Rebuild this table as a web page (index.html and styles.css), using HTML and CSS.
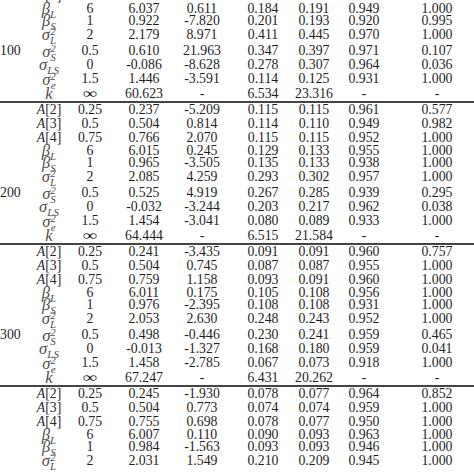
FILE: index.html
```html
<!DOCTYPE html>
<html>
<head>
<meta charset="utf-8">
<link rel="stylesheet" href="styles.css">
</head>
<body>
<div class="sheet">
  <div class="blk first">
    <div class="row ra4"><div class="c lab"></div><div class="c m"><i>A</i>[4]</div><div class="c"></div><div class="c"></div><div class="c"></div><div class="c"></div><div class="c"></div><div class="c"></div><div class="c"></div></div>
    <div class="row rbl"><div class="c lab"></div><div class="c m g"><i>β</i><span class="sb">L</span></div><div class="c">6</div><div class="c">6.037</div><div class="c">0.611</div><div class="c">0.184</div><div class="c">0.191</div><div class="c">0.949</div><div class="c">1.000</div></div>
    <div class="row rbs"><div class="c lab"></div><div class="c m g"><i>β</i><span class="sb">S</span></div><div class="c">1</div><div class="c">0.922</div><div class="c">-7.820</div><div class="c">0.201</div><div class="c">0.193</div><div class="c">0.920</div><div class="c">0.995</div></div>
    <div class="row rsl"><div class="c lab"></div><div class="c m g"><i>σ</i><span class="st"><span>2</span><span>L</span></span></div><div class="c">2</div><div class="c">2.179</div><div class="c">8.971</div><div class="c">0.411</div><div class="c">0.445</div><div class="c">0.970</div><div class="c">1.000</div></div>
    <div class="row rss"><div class="c lab">100</div><div class="c m g"><i>σ</i><span class="st"><span>2</span><span>S</span></span></div><div class="c">0.5</div><div class="c">0.610</div><div class="c">21.963</div><div class="c">0.347</div><div class="c">0.397</div><div class="c">0.971</div><div class="c">0.107</div></div>
    <div class="row rls"><div class="c lab"></div><div class="c m g"><i>σ</i><span class="sb">LS</span></div><div class="c">0</div><div class="c">-0.086</div><div class="c">-8.628</div><div class="c">0.278</div><div class="c">0.307</div><div class="c">0.964</div><div class="c">0.036</div></div>
    <div class="row rse"><div class="c lab"></div><div class="c m g"><i>σ</i><span class="st"><span>2</span><span>e</span></span></div><div class="c">1.5</div><div class="c">1.446</div><div class="c">-3.591</div><div class="c">0.114</div><div class="c">0.125</div><div class="c">0.931</div><div class="c">1.000</div></div>
    <div class="row rk"><div class="c lab"></div><div class="c m g"><i>k</i></div><div class="c"><span class="inf">∞</span></div><div class="c">60.623</div><div class="c">-</div><div class="c">6.534</div><div class="c">23.316</div><div class="c">-</div><div class="c">-</div></div>
  </div>

  <div class="blk">
    <div class="row ra2"><div class="c lab"></div><div class="c m"><i>A</i>[2]</div><div class="c">0.25</div><div class="c">0.237</div><div class="c">-5.209</div><div class="c">0.115</div><div class="c">0.115</div><div class="c">0.961</div><div class="c">0.577</div></div>
    <div class="row ra3"><div class="c lab"></div><div class="c m"><i>A</i>[3]</div><div class="c">0.5</div><div class="c">0.504</div><div class="c">0.814</div><div class="c">0.114</div><div class="c">0.110</div><div class="c">0.949</div><div class="c">0.982</div></div>
    <div class="row ra4"><div class="c lab"></div><div class="c m"><i>A</i>[4]</div><div class="c">0.75</div><div class="c">0.766</div><div class="c">2.070</div><div class="c">0.115</div><div class="c">0.115</div><div class="c">0.952</div><div class="c">1.000</div></div>
    <div class="row rbl"><div class="c lab"></div><div class="c m g"><i>β</i><span class="sb">L</span></div><div class="c">6</div><div class="c">6.015</div><div class="c">0.245</div><div class="c">0.129</div><div class="c">0.133</div><div class="c">0.955</div><div class="c">1.000</div></div>
    <div class="row rbs"><div class="c lab"></div><div class="c m g"><i>β</i><span class="sb">S</span></div><div class="c">1</div><div class="c">0.965</div><div class="c">-3.505</div><div class="c">0.135</div><div class="c">0.133</div><div class="c">0.938</div><div class="c">1.000</div></div>
    <div class="row rsl"><div class="c lab"></div><div class="c m g"><i>σ</i><span class="st"><span>2</span><span>L</span></span></div><div class="c">2</div><div class="c">2.085</div><div class="c">4.259</div><div class="c">0.293</div><div class="c">0.302</div><div class="c">0.957</div><div class="c">1.000</div></div>
    <div class="row rss"><div class="c lab">200</div><div class="c m g"><i>σ</i><span class="st"><span>2</span><span>S</span></span></div><div class="c">0.5</div><div class="c">0.525</div><div class="c">4.919</div><div class="c">0.267</div><div class="c">0.285</div><div class="c">0.939</div><div class="c">0.295</div></div>
    <div class="row rls"><div class="c lab"></div><div class="c m g"><i>σ</i><span class="sb">LS</span></div><div class="c">0</div><div class="c">-0.032</div><div class="c">-3.244</div><div class="c">0.203</div><div class="c">0.217</div><div class="c">0.962</div><div class="c">0.038</div></div>
    <div class="row rse"><div class="c lab"></div><div class="c m g"><i>σ</i><span class="st"><span>2</span><span>e</span></span></div><div class="c">1.5</div><div class="c">1.454</div><div class="c">-3.041</div><div class="c">0.080</div><div class="c">0.089</div><div class="c">0.933</div><div class="c">1.000</div></div>
    <div class="row rk"><div class="c lab"></div><div class="c m g"><i>k</i></div><div class="c"><span class="inf">∞</span></div><div class="c">64.444</div><div class="c">-</div><div class="c">6.515</div><div class="c">21.584</div><div class="c">-</div><div class="c">-</div></div>
  </div>

  <div class="blk">
    <div class="row ra2"><div class="c lab"></div><div class="c m"><i>A</i>[2]</div><div class="c">0.25</div><div class="c">0.241</div><div class="c">-3.435</div><div class="c">0.091</div><div class="c">0.091</div><div class="c">0.960</div><div class="c">0.757</div></div>
    <div class="row ra3"><div class="c lab"></div><div class="c m"><i>A</i>[3]</div><div class="c">0.5</div><div class="c">0.504</div><div class="c">0.745</div><div class="c">0.087</div><div class="c">0.087</div><div class="c">0.955</div><div class="c">1.000</div></div>
    <div class="row ra4"><div class="c lab"></div><div class="c m"><i>A</i>[4]</div><div class="c">0.75</div><div class="c">0.759</div><div class="c">1.158</div><div class="c">0.093</div><div class="c">0.091</div><div class="c">0.960</div><div class="c">1.000</div></div>
    <div class="row rbl"><div class="c lab"></div><div class="c m g"><i>β</i><span class="sb">L</span></div><div class="c">6</div><div class="c">6.011</div><div class="c">0.175</div><div class="c">0.105</div><div class="c">0.108</div><div class="c">0.956</div><div class="c">1.000</div></div>
    <div class="row rbs"><div class="c lab"></div><div class="c m g"><i>β</i><span class="sb">S</span></div><div class="c">1</div><div class="c">0.976</div><div class="c">-2.395</div><div class="c">0.108</div><div class="c">0.108</div><div class="c">0.931</div><div class="c">1.000</div></div>
    <div class="row rsl"><div class="c lab"></div><div class="c m g"><i>σ</i><span class="st"><span>2</span><span>L</span></span></div><div class="c">2</div><div class="c">2.053</div><div class="c">2.630</div><div class="c">0.248</div><div class="c">0.243</div><div class="c">0.952</div><div class="c">1.000</div></div>
    <div class="row rss"><div class="c lab">300</div><div class="c m g"><i>σ</i><span class="st"><span>2</span><span>S</span></span></div><div class="c">0.5</div><div class="c">0.498</div><div class="c">-0.446</div><div class="c">0.230</div><div class="c">0.241</div><div class="c">0.959</div><div class="c">0.465</div></div>
    <div class="row rls"><div class="c lab"></div><div class="c m g"><i>σ</i><span class="sb">LS</span></div><div class="c">0</div><div class="c">-0.013</div><div class="c">-1.327</div><div class="c">0.168</div><div class="c">0.180</div><div class="c">0.959</div><div class="c">0.041</div></div>
    <div class="row rse"><div class="c lab"></div><div class="c m g"><i>σ</i><span class="st"><span>2</span><span>e</span></span></div><div class="c">1.5</div><div class="c">1.458</div><div class="c">-2.785</div><div class="c">0.067</div><div class="c">0.073</div><div class="c">0.918</div><div class="c">1.000</div></div>
    <div class="row rk"><div class="c lab"></div><div class="c m g"><i>k</i></div><div class="c"><span class="inf">∞</span></div><div class="c">67.247</div><div class="c">-</div><div class="c">6.431</div><div class="c">20.262</div><div class="c">-</div><div class="c">-</div></div>
  </div>

  <div class="blk">
    <div class="row ra2"><div class="c lab"></div><div class="c m"><i>A</i>[2]</div><div class="c">0.25</div><div class="c">0.245</div><div class="c">-1.930</div><div class="c">0.078</div><div class="c">0.077</div><div class="c">0.964</div><div class="c">0.852</div></div>
    <div class="row ra3"><div class="c lab"></div><div class="c m"><i>A</i>[3]</div><div class="c">0.5</div><div class="c">0.504</div><div class="c">0.773</div><div class="c">0.074</div><div class="c">0.074</div><div class="c">0.959</div><div class="c">1.000</div></div>
    <div class="row ra4"><div class="c lab"></div><div class="c m"><i>A</i>[4]</div><div class="c">0.75</div><div class="c">0.755</div><div class="c">0.698</div><div class="c">0.078</div><div class="c">0.077</div><div class="c">0.950</div><div class="c">1.000</div></div>
    <div class="row rbl"><div class="c lab"></div><div class="c m g"><i>β</i><span class="sb">L</span></div><div class="c">6</div><div class="c">6.007</div><div class="c">0.110</div><div class="c">0.090</div><div class="c">0.093</div><div class="c">0.963</div><div class="c">1.000</div></div>
    <div class="row rbs"><div class="c lab"></div><div class="c m g"><i>β</i><span class="sb">S</span></div><div class="c">1</div><div class="c">0.984</div><div class="c">-1.563</div><div class="c">0.093</div><div class="c">0.093</div><div class="c">0.946</div><div class="c">1.000</div></div>
    <div class="row rsl"><div class="c lab"></div><div class="c m g"><i>σ</i><span class="st"><span>2</span><span>L</span></span></div><div class="c">2</div><div class="c">2.031</div><div class="c">1.549</div><div class="c">0.210</div><div class="c">0.209</div><div class="c">0.945</div><div class="c">1.000</div></div>
  </div>
</div>
</body>
</html>
```
FILE: styles.css
```css
html, body {
  margin: 0;
  padding: 0;
  background: #ffffff;
}
body {
  width: 474px;
  height: 474px;
  overflow: hidden;
  font-family: "Liberation Serif", "Times New Roman", serif;
  font-size: 13.8px;
  color: #1e1e1e;
}
.sheet {
  width: 480px;
  margin-top: -11.5px;
}
.blk + .blk {
  border-top: 2px solid #444444;
}
.row {
  display: grid;
  grid-template-columns: 34px 30px 52px 56px 60px 62px 40px 60px 86px;
  height: var(--h);
  line-height: var(--h);
}
.ra2 { --h: 14px; }
.ra3 { --h: 14px; }
.ra4 { --h: 13.5px; }
.rbl { --h: 13px; }
.rbs { --h: 12px; }
.rsl { --h: 16.5px; }
.rss { --h: 14.5px; }
.rls { --h: 14px; }
.rse { --h: 14.5px; }
.rk  { --h: 14px; }

.c {
  text-align: center;
  white-space: nowrap;
}
.c.lab {
  text-align: left;
}
.m {
  color: #2a2a2a;
}
.m.g {
  color: #505050;
}
.m i {
  font-style: italic;
}
.m.g i {
  font-size: 1.2em;
}
.sb {
  font-style: italic;
  font-size: 0.8em;
  vertical-align: -0.4em;
  line-height: 1;
}
.st {
  display: inline-flex;
  flex-direction: column;
  font-style: italic;
  font-size: 0.8em;
  line-height: 0.85;
  vertical-align: 0.45em;
}
.inf {
  display: inline-block;
  transform: scaleX(1.45);
}
```
